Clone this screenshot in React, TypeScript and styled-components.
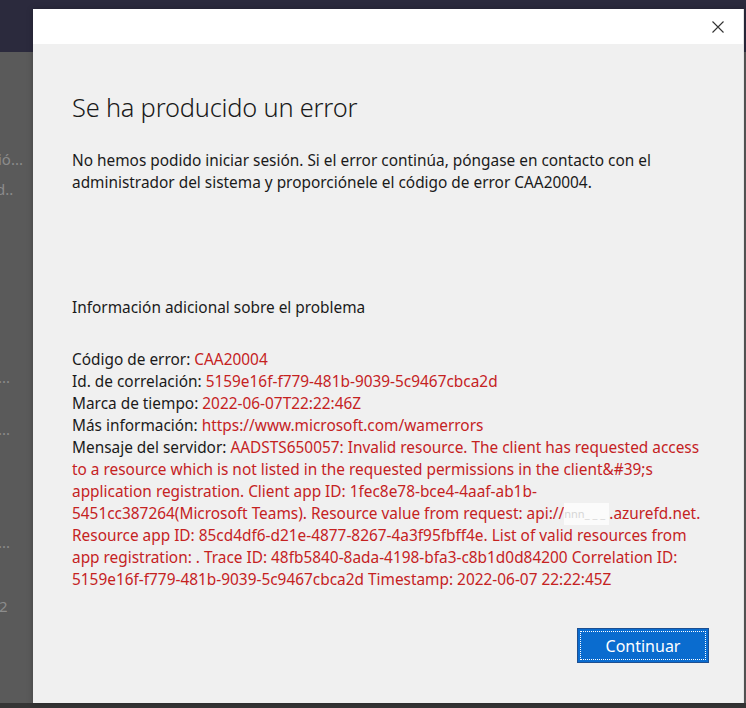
import React from "react";
import styled, { createGlobalStyle } from "styled-components";

const GlobalStyle = createGlobalStyle`
  html, body {
    margin: 0;
    padding: 0;
    height: 100%;
  }
  body {
    font-family: "Noto Sans", "Open Sans", sans-serif;
    overflow: hidden;
  }
  #root {
    height: 100%;
  }
`;

const sideItems = [
  { top: 149, left: -2, text: "ió..." },
  { top: 179, left: -4, text: "d.." },
  { top: 367, left: -2, text: "..." },
  { top: 419, left: -2, text: "..." },
  { top: 532, left: -2, text: "..." },
  { top: 596, left: -1, text: "2" },
];

const App = (): JSX.Element => {
  return (
    <>
      <GlobalStyle />
      <Page>
        <AppHeader />
        <AppMain>
          <SideList>
            {sideItems.map((item, i) => (
              <SideItem key={i} $top={item.top} $left={item.left}>
                {item.text}
              </SideItem>
            ))}
          </SideList>
        </AppMain>
        <TaskStrip />

        <Dialog role="dialog" aria-labelledby="err-title">
          <DialogHeader>
            <CloseButton aria-label="Cerrar">
              <svg width="12" height="12" viewBox="0 0 12 12">
                <path
                  d="M0.5 0.5 L11.5 11.5 M11.5 0.5 L0.5 11.5"
                  stroke="#333"
                  strokeWidth="1.1"
                  fill="none"
                />
              </svg>
            </CloseButton>
          </DialogHeader>

          <DialogBody>
            <Title id="err-title">Se ha producido un error</Title>
            <Intro>
              No hemos podido iniciar sesión. Si el error continúa, póngase en contacto con el
              <br />
              administrador del sistema y proporciónele el código de error CAA20004.
            </Intro>

            <SubHeading>Información adicional sobre el problema</SubHeading>

            <Details>
              <Line>
                Código de error: <Red>CAA20004</Red>
              </Line>
              <Line>
                Id. de correlación: <Red>5159e16f-f779-481b-9039-5c9467cbca2d</Red>
              </Line>
              <Line>
                Marca de tiempo: <Red>2022-06-07T22:22:46Z</Red>
              </Line>
              <Line>
                Más información: <Red>https://www.microsoft.com/wamerrors</Red>
              </Line>
              <Line>
                Mensaje del servidor:{" "}
                <Red>AADSTS650057: Invalid resource. The client has requested access</Red>
              </Line>
              <Line>
                <Red>
                  {"to a resource which is not listed in the requested permissions in the client&#39;s"}
                </Red>
              </Line>
              <Line>
                <Red>application registration. Client app ID: 1fec8e78-bce4-4aaf-ab1b-</Red>
              </Line>
              <Line>
                <Red>
                  5451cc387264(Microsoft Teams). Resource value from request: api://
                  <Redacted>nnn_ _ _</Redacted>.azurefd.net.
                </Red>
              </Line>
              <Line>
                <Red>
                  Resource app ID: 85cd4df6-d21e-4877-8267-4a3f95fbff4e. List of valid resources from
                </Red>
              </Line>
              <Line>
                <Red>
                  app registration: . Trace ID: 48fb5840-8ada-4198-bfa3-c8b1d0d84200 Correlation ID:
                </Red>
              </Line>
              <Line>
                <Red>5159e16f-f779-481b-9039-5c9467cbca2d Timestamp: 2022-06-07 22:22:45Z</Red>
              </Line>
            </Details>

            <Actions>
              <PrimaryButton>
                <FocusRing>Continuar</FocusRing>
              </PrimaryButton>
            </Actions>
          </DialogBody>
        </Dialog>
      </Page>
    </>
  );
};

const Page = styled.div`
  position: relative;
  display: flex;
  flex-direction: column;
  width: 746px;
  height: 708px;
  background: #5a5a5a;
`;

const AppHeader = styled.div`
  flex: 0 0 52px;
  background: #2b2a3d;
`;

const AppMain = styled.div`
  flex: 1 1 auto;
  display: flex;
  background: #5a5a5a;
`;

const SideList = styled.div`
  position: relative;
  width: 33px;
  overflow: hidden;
`;

const SideItem = styled.div<{ $top: number; $left: number }>`
  position: absolute;
  left: ${({ $left }) => $left}px;
  top: ${({ $top }) => $top - 52}px;
  font-size: 15px;
  line-height: 20px;
  color: #8c8c8c;
  white-space: nowrap;
`;

const TaskStrip = styled.div`
  flex: 0 0 5px;
  background: #353535;
`;

const Dialog = styled.div`
  position: absolute;
  left: 33px;
  top: 9px;
  width: 710px;
  height: 694px;
  display: flex;
  flex-direction: column;
  background: #f0f0f0;
  border-right: 1px solid #e4e4e4;
  box-shadow: 0 0 6px rgba(0, 0, 0, 0.25);
`;

const DialogHeader = styled.div`
  flex: 0 0 35px;
  display: flex;
  align-items: center;
  justify-content: flex-end;
  padding-right: 15px;
  background: #ffffff;
`;

const CloseButton = styled.button`
  display: flex;
  align-items: center;
  justify-content: center;
  width: 20px;
  height: 20px;
  padding: 0;
  border: none;
  background: transparent;
  cursor: pointer;
`;

const DialogBody = styled.div`
  flex: 1 1 auto;
  display: flex;
  flex-direction: column;
  padding: 0 34px 0 39px;
  color: #1a1a1a;
`;

const Title = styled.h1`
  margin: 47px 0 0;
  font-size: 25.4px;
  line-height: 33px;
  font-weight: 300;
  color: #1a1a1a;
  letter-spacing: -0.2px;
`;

const Intro = styled.p`
  margin: 26px 0 0;
  font-size: 15.4px;
  line-height: 22px;
  white-space: nowrap;
`;

const SubHeading = styled.h2`
  margin: 103px 0 0;
  font-size: 15.4px;
  line-height: 22px;
  font-weight: 400;
`;

const Details = styled.div`
  margin-top: 30px;
  display: flex;
  flex-direction: column;
  font-size: 15.4px;
  line-height: 22px;
`;

const Line = styled.div`
  white-space: nowrap;
`;

const Red = styled.span`
  color: #c5221f;
`;

const Redacted = styled.span`
  display: inline-block;
  width: 45px;
  background: #fbfbfb;
  color: #d6d6d6;
  font-size: 11px;
  overflow: hidden;
  vertical-align: bottom;
`;

const Actions = styled.div`
  display: flex;
  justify-content: flex-end;
  margin-top: 37px;
`;

const PrimaryButton = styled.button`
  width: 132px;
  height: 35px;
  padding: 2px;
  border: 1px solid #1d4f91;
  background: #0a6ccf;
  color: #ffffff;
  font-family: inherit;
  font-size: 16px;
  cursor: pointer;
`;

const FocusRing = styled.span`
  display: flex;
  align-items: center;
  justify-content: center;
  height: 100%;
  box-sizing: border-box;
  border: 1px dotted #ffffff;
`;

export default App;
